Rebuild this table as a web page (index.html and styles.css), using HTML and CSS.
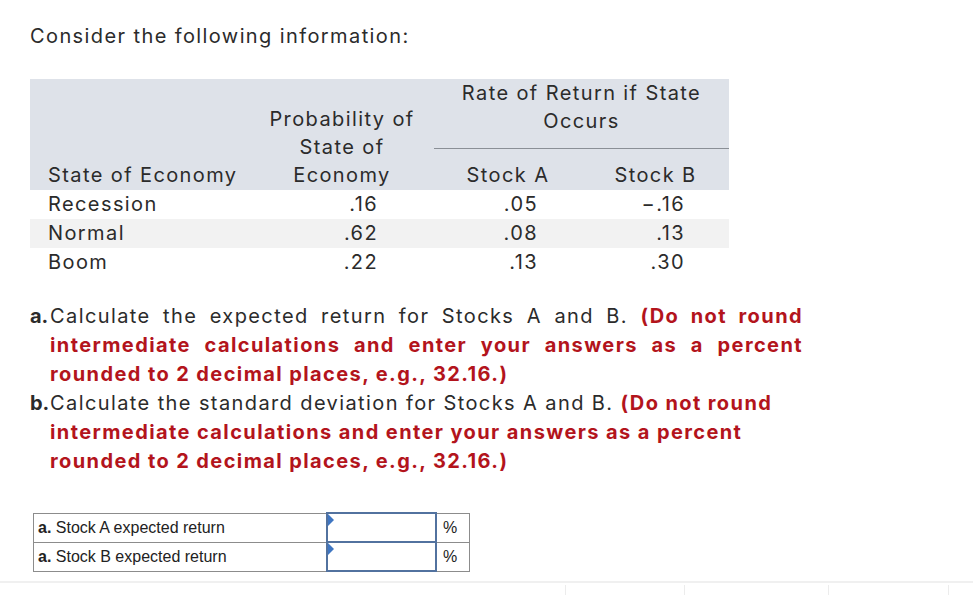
FILE: index.html
```html
<!DOCTYPE html>
<html>
<head>
<meta charset="utf-8">
<link rel="stylesheet" href="styles.css">
</head>
<body>
<div class="page">
  <p class="intro">Consider the following information:</p>
  <table class="data">
    <colgroup>
      <col class="c1"><col class="c2"><col class="c3"><col class="c4">
    </colgroup>
    <thead>
      <tr>
        <th rowspan="2" class="state">State of Economy</th>
        <th rowspan="2" class="prob">Probability of<br>State of<br>Economy</th>
        <th colspan="2" class="rate">Rate of Return if State<br>Occurs</th>
      </tr>
      <tr>
        <th class="stock">Stock A</th>
        <th class="stock">Stock B</th>
      </tr>
    </thead>
    <tbody>
      <tr><td class="name">Recession</td><td class="v2">.16</td><td class="v3">.05</td><td class="v3">−.16</td></tr>
      <tr class="alt"><td class="name">Normal</td><td class="v2">.62</td><td class="v3">.08</td><td class="v3">.13</td></tr>
      <tr><td class="name">Boom</td><td class="v2">.22</td><td class="v3">.13</td><td class="v3">.30</td></tr>
    </tbody>
  </table>

  <div class="q q-a">
    <span class="lbl">a.</span>
    <div class="qt">
      <span class="line just">Calculate the expected return for Stocks A and B. <b class="red">(Do not round</b></span>
      <span class="line just"><b class="red">intermediate calculations and enter your answers as a percent</b></span>
      <span class="line"><b class="red">rounded to 2 decimal places, e.g., 32.16.)</b></span>
    </div>
  </div>
  <div class="q q-b">
    <span class="lbl">b.</span>
    <div class="qt">
      <span class="line">Calculate the standard deviation for Stocks A and B. <b class="red">(Do not round</b></span>
      <span class="line"><b class="red">intermediate calculations and enter your answers as a percent</b></span>
      <span class="line"><b class="red">rounded to 2 decimal places, e.g., 32.16.)</b></span>
    </div>
  </div>

  <table class="ans">
    <tr>
      <td class="al"><b>a.</b> Stock A expected return</td>
      <td class="inp"><span class="flag"></span></td>
      <td class="pct">%</td>
    </tr>
    <tr>
      <td class="al"><b>a.</b> Stock B expected return</td>
      <td class="inp"><span class="flag"></span></td>
      <td class="pct">%</td>
    </tr>
  </table>
</div>
<div class="footer">
  <div class="ticks">
    <span class="tick t1"></span><span class="tick t2"></span><span class="tick t3"></span><span class="tick t4"></span>
  </div>
</div>
</body>
</html>
```

FILE: styles.css
```css
html, body {
  margin: 0;
  padding: 0;
  background: #fff;
}
body {
  font-family: "Inter", "Liberation Sans", sans-serif;
  color: #2b2b2b;
  width: 973px;
  height: 595px;
  overflow: hidden;
}
.page {
  padding: 22px 0 0 30px;
  height: 559px;
  letter-spacing: 1.4px;
}
.intro {
  margin: 0;
  font-size: 20px;
  line-height: 28px;
}
.data {
  margin-top: 29px;
  border-collapse: collapse;
  width: 699px;
  font-size: 20px;
  table-layout: fixed;
}
.c1 { width: 236px; }
.c2 { width: 168px; }
.c3 { width: 148px; }
.c4 { width: 147px; }
.data th {
  font-weight: normal;
  background: #dee2e9;
  padding: 0;
  line-height: 28px;
}
.data th.state {
  text-align: left;
  padding-left: 18px;
  vertical-align: bottom;
  padding-bottom: 1px;
}
.data th.prob {
  vertical-align: bottom;
  padding-right: 16px;
  padding-bottom: 1px;
}
.data th.rate {
  vertical-align: top;
  height: 55px;
  padding-bottom: 13px;
  border-bottom: 1px solid #8a8f96;
}
.data th.stock {
  padding-top: 12px;
  padding-bottom: 1px;
}
.data td {
  padding: 0;
  height: 29px;
  line-height: 29px;
}
.data tr.alt td { background: #f2f2f2; }
.data td.name { padding-left: 18px; }
.data td.v2 { text-align: right; padding-right: 56px; }
.data td.v3 { text-align: right; padding-right: 44px; }

.q {
  display: flex;
  width: 773px;
  font-size: 20px;
  line-height: 29px;
}
.q-a { margin-top: 25px; }
.lbl {
  font-weight: bold;
  width: 20px;
  flex: none;
  letter-spacing: 0;
}
.qt {
  flex: 1;
}
.line {
  display: block;
  white-space: nowrap;
}
.line.just {
  white-space: normal;
  text-align: justify;
  text-align-last: justify;
}
.red {
  color: #b3141c;
  font-weight: bold;
}

.ans {
  margin-top: 36px;
  margin-left: 3px;
  border-collapse: collapse;
  font-family: "Liberation Sans", Arial, sans-serif;
  font-size: 16px;
  letter-spacing: 0;
  color: #222;
}
.ans td {
  height: 27px;
  padding: 0;
  border: 1px solid #8c8c8c;
}
.ans td.al {
  width: 288px;
  padding-left: 4px;
}
.ans td.inp {
  width: 107px;
  border: 2px solid #52729f;
  position: relative;
}
.ans td.pct {
  width: 26px;
  padding-left: 6px;
}
.flag {
  position: absolute;
  left: 0;
  top: 0;
  width: 0;
  height: 0;
  border-top: 6px solid transparent;
  border-bottom: 6px solid transparent;
  border-left: 6px solid #3f76c2;
}
.footer {
  border-top: 2px solid #f0f0f0;
  height: 14px;
  position: relative;
}
.tick {
  position: absolute;
  top: 2px;
  width: 1px;
  height: 12px;
  background: #ececec;
}
.t1 { left: 565px; }
.t2 { left: 684px; }
.t3 { left: 828px; }
.t4 { left: 948px; }
```
